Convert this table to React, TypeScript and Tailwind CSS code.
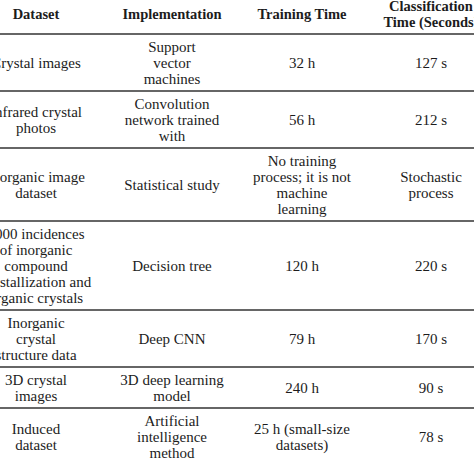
import React from "react";

type Row = string[][];

const header: string[][] = [
  ["Dataset"],
  ["Implementation"],
  ["Training Time"],
  ["Classification", "Time (Seconds)"],
];

const rows: Row[] = [
  [["Crystal images"], ["Support", "vector", "machines"], ["32 h"], ["127 s"]],
  [["Infrared crystal", "photos"], ["Convolution", "network trained", "with"], ["56 h"], ["212 s"]],
  [
    ["Inorganic image", "dataset"],
    ["Statistical study"],
    ["No training", "process; it is not", "machine", "learning"],
    ["Stochastic", "process"],
  ],
  [
    ["3000 incidences", "of inorganic", "compound", "crystallization and", "organic crystals"],
    ["Decision tree"],
    ["120 h"],
    ["220 s"],
  ],
  [["Inorganic", "crystal", "structure data"], ["Deep CNN"], ["79 h"], ["170 s"]],
  [["3D crystal", "images"], ["3D deep learning", "model"], ["240 h"], ["90 s"]],
  [["Induced", "dataset"], ["Artificial", "intelligence", "method"], ["25 h (small-size", "datasets)"], ["78 s"]],
];

function Cell({ lines, bold }: { lines: string[]; bold?: boolean }) {
  return (
    <div
      className={
        "flex flex-col items-center justify-center text-center py-[3.5px] " +
        (bold ? "font-bold text-[14.5px]" : "text-[15px]")
      }
    >
      {lines.map((l, i) => (
        <span key={i} className="whitespace-nowrap">
          {l}
        </span>
      ))}
    </div>
  );
}

export default function App() {
  return (
    <div className="w-[474px] h-[474px] overflow-hidden bg-white">
      <div
        className="-ml-[32px] -mt-[6px] w-[530px] leading-[16px] text-[#1c1c1c]"
        style={{ fontFamily: '"Liberation Serif", "Times New Roman", serif' }}
      >
        <div className="grid grid-cols-[136px_136px_124px_134px] border-b-2 border-[#666]">
          {header.map((h, i) => (
            <Cell key={i} lines={h} bold />
          ))}
        </div>
        {rows.map((r, ri) => (
          <div
            key={ri}
            className={
              "grid grid-cols-[136px_136px_124px_134px] " +
              (ri < rows.length - 1 ? "border-b-2 border-[#666]" : "")
            }
          >
            {r.map((c, ci) => (
              <Cell key={ci} lines={c} />
            ))}
          </div>
        ))}
      </div>
    </div>
  );
}
